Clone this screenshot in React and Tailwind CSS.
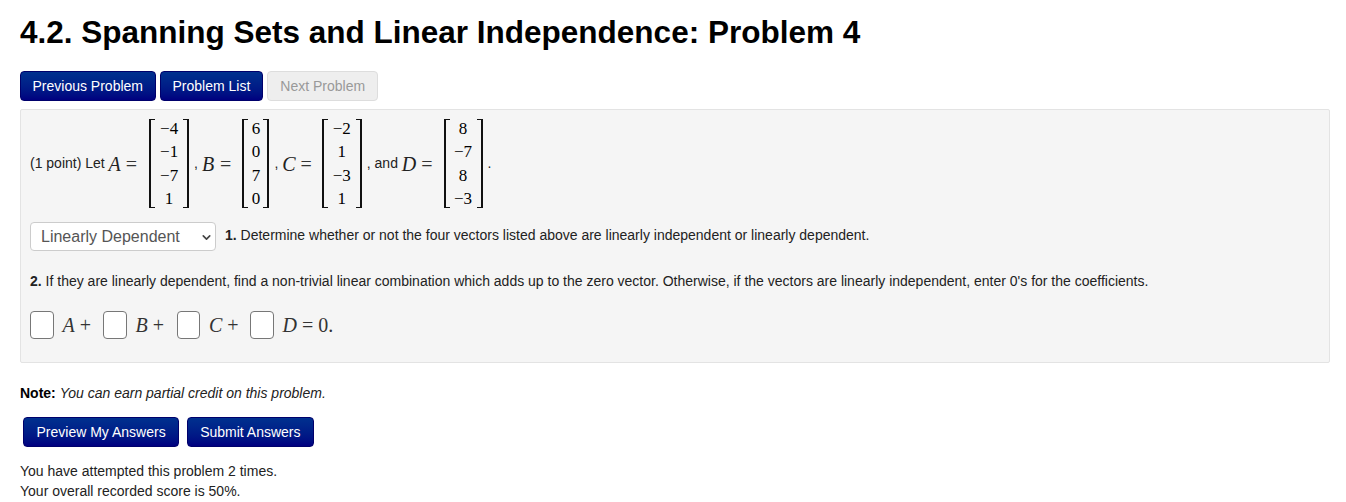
import React from "react";
import { ChevronDown } from "lucide-react";

const navyBtn =
  "h-[30px] flex items-center rounded-[4px] border border-[#00006b] bg-gradient-to-b from-[#00308f] to-[#000080] text-white text-[14px]";

function Matrix({ rows, width }) {
  return (
    <span className={"relative inline-flex flex-col items-center justify-center h-[89px] mr-[5px] " + width}>
      <span className="absolute left-0 top-0 bottom-0 w-[6px] border-l-2 border-y border-[#111]" />
      <span className="absolute right-0 top-0 bottom-0 w-[6px] border-r-2 border-y border-[#111]" />
      {rows.map((r, i) => (
        <span key={i} className="h-[23.5px] leading-[23.5px] text-[17px] text-black font-['Liberation_Serif',serif]">
          {r}
        </span>
      ))}
    </span>
  );
}

function MathVar({ children }) {
  return <i className="font-['Liberation_Serif',serif] text-[20px] text-[#222]">{children}</i>;
}

function Eq({ gap }) {
  return <span className={"font-['Liberation_Serif',serif] text-[20px] text-[#333] " + gap}>=</span>;
}

function Blank() {
  return <span className="w-[23.5px] h-[28px] rounded-[4px] border border-[#777] bg-white shrink-0" />;
}

export default function App() {
  return (
    <div className="w-[1346px] h-[502px] overflow-hidden bg-white pl-5 pr-4 font-['Liberation_Sans',Arial,sans-serif] text-[14px] text-[#222]">
      <h1 className="pt-[12px] text-[31.5px] leading-[40px] font-bold text-black">
        4.2. Spanning Sets and Linear Independence: Problem 4
      </h1>

      <div className="flex gap-1 mt-[19px]">
        <button className={navyBtn + " px-[11.5px]"}>Previous Problem</button>
        <button className={navyBtn + " px-3"}>Problem List</button>
        <button className="h-[30px] px-3 rounded-[4px] border border-[#ddd] bg-[#eeeeee] text-[#999] text-[14px]">Next Problem</button>
      </div>

      <div className="mt-[8px] w-[1310px] h-[254px] rounded-[2px] border border-[#e3e3e3] bg-[#f5f5f5] pl-[9px]">
        <div className="flex items-center h-[89px] mt-[9px]">
          <span>(1 point) Let&nbsp;</span>
          <MathVar>A</MathVar>
          <Eq gap="ml-[5px] mr-[12px]" />
          <Matrix rows={["−4", "−1", "−7", "1"]} width="w-[40px]" />
          <span>,&nbsp;</span>
          <MathVar>B</MathVar>
          <Eq gap="ml-[6px] mr-[11px]" />
          <Matrix rows={["6", "0", "7", "0"]} width="w-[27px]" />
          <span>,&nbsp;</span>
          <MathVar>C</MathVar>
          <Eq gap="ml-[5px] mr-[10px]" />
          <Matrix rows={["−2", "1", "−3", "1"]} width="w-[40px]" />
          <span>, and&nbsp;</span>
          <MathVar>D</MathVar>
          <Eq gap="ml-[5px] mr-[11px]" />
          <Matrix rows={["8", "−7", "8", "−3"]} width="w-[39px]" />
          <span>.</span>
        </div>

        <div className="flex items-center mt-[14px] h-[29px]">
          <div className="relative w-[186px] h-[29px] rounded-[4px] border border-[#ccc] bg-white pl-[10px] flex items-center text-[16px] text-[#555]">
            Linearly Dependent
            <ChevronDown size={13} strokeWidth={3} className="absolute right-[2px] top-[8px] text-[#444]" />
          </div>
          <p className="ml-[9px] mb-[2px]">
            <b>1.</b> Determine whether or not the four vectors listed above are linearly independent or linearly dependent.
          </p>
        </div>

        <p className="mt-[20px] leading-[20px]">
          <b>2.</b> If they are linearly dependent, find a non-trivial linear combination which adds up to the zero vector. Otherwise, if the vectors are linearly independent, enter 0's for the coefficients.
        </p>

        <div className="flex items-center mt-[20px] h-[28px]">
          <Blank />
          <span className="ml-[9px] w-[40.5px] text-[20px] font-['Liberation_Serif',serif] text-[#333]"><i>A</i> +</span>
          <Blank />
          <span className="ml-[9px] w-[41px] text-[20px] font-['Liberation_Serif',serif] text-[#333]"><i>B</i> +</span>
          <Blank />
          <span className="ml-[9px] w-[41px] text-[20px] font-['Liberation_Serif',serif] text-[#333]"><i>C</i> +</span>
          <Blank />
          <span className="ml-[9px] text-[20px] font-['Liberation_Serif',serif] text-[#333]"><i>D</i> = 0.</span>
        </div>
      </div>

      <p className="mt-[20px] leading-[20px]">
        <b className="text-black">Note:</b> <i>You can earn partial credit on this problem.</i>
      </p>

      <div className="flex gap-2 mt-[14px] ml-[3px]">
        <button className={navyBtn + " px-[12.5px]"}>Preview My Answers</button>
        <button className={navyBtn + " px-3"}>Submit Answers</button>
      </div>

      <p className="mt-[14px] leading-[20px]">
        You have attempted this problem 2 times.
        <br />
        Your overall recorded score is 50%.
      </p>
    </div>
  );
}
